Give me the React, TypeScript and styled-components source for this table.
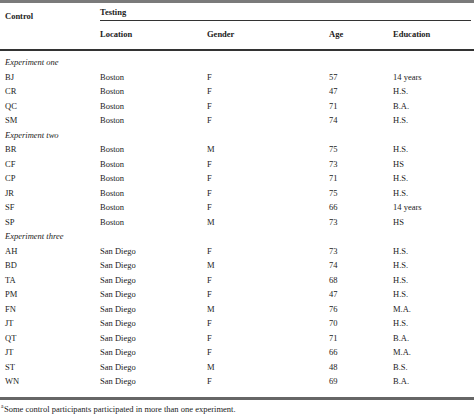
import styled, { createGlobalStyle } from "styled-components";

const GlobalStyle = createGlobalStyle`
  html, body { margin: 0; padding: 0; background: #fff; }
  body { font-family: "Liberation Serif", "Times New Roman", serif; color: #222; }
`;

type Row = { id: string; loc: string; gender: string; age: number; edu: string };
type Group = { title: string; rows: Row[] };

const groups: Group[] = [
  {
    title: "Experiment one",
    rows: [
      { id: "BJ", loc: "Boston", gender: "F", age: 57, edu: "14 years" },
      { id: "CR", loc: "Boston", gender: "F", age: 47, edu: "H.S." },
      { id: "QC", loc: "Boston", gender: "F", age: 71, edu: "B.A." },
      { id: "SM", loc: "Boston", gender: "F", age: 74, edu: "H.S." },
    ],
  },
  {
    title: "Experiment two",
    rows: [
      { id: "BR", loc: "Boston", gender: "M", age: 75, edu: "H.S." },
      { id: "CF", loc: "Boston", gender: "F", age: 73, edu: "HS" },
      { id: "CP", loc: "Boston", gender: "F", age: 71, edu: "H.S." },
      { id: "JR", loc: "Boston", gender: "F", age: 75, edu: "H.S." },
      { id: "SF", loc: "Boston", gender: "F", age: 66, edu: "14 years" },
      { id: "SP", loc: "Boston", gender: "M", age: 73, edu: "HS" },
    ],
  },
  {
    title: "Experiment three",
    rows: [
      { id: "AH", loc: "San Diego", gender: "F", age: 73, edu: "H.S." },
      { id: "BD", loc: "San Diego", gender: "M", age: 74, edu: "H.S." },
      { id: "TA", loc: "San Diego", gender: "F", age: 68, edu: "H.S." },
      { id: "PM", loc: "San Diego", gender: "F", age: 47, edu: "H.S." },
      { id: "FN", loc: "San Diego", gender: "M", age: 76, edu: "M.A." },
      { id: "JT", loc: "San Diego", gender: "F", age: 70, edu: "H.S." },
      { id: "QT", loc: "San Diego", gender: "F", age: 71, edu: "B.A." },
      { id: "JT", loc: "San Diego", gender: "F", age: 66, edu: "M.A." },
      { id: "ST", loc: "San Diego", gender: "M", age: 48, edu: "B.S." },
      { id: "WN", loc: "San Diego", gender: "F", age: 69, edu: "B.A." },
    ],
  },
];

const cols = "95px 107px 122px 64px 1fr";

const Page = styled.div`
  width: 474px;
  font-size: 8.5px;
  border-top: 3px solid #7a7a7a;
`;

const Head = styled.div`
  display: grid;
  grid-template-columns: ${cols};
  padding-left: 5px;
  border-bottom: 2px solid #333;
  font-weight: bold;
`;

const Control = styled.div`
  grid-row: 1 / span 2;
  padding-top: 8px;
`;

const Testing = styled.div`
  grid-column: 2 / span 4;
  margin-right: 3px;
  height: 18px;
  padding-top: 4px;
  box-sizing: border-box;
  border-bottom: 1.5px solid #333;
`;

const HeadCell = styled.div`
  height: 28px;
  line-height: 27px;
`;

const Body = styled.div`
  padding: 4px 0 8px 5px;
  border-bottom: 3px solid #666;
`;

const GroupTitle = styled.div`
  font-style: italic;
  height: 14.5px;
  line-height: 14.5px;
`;

const DataRow = styled.div`
  display: grid;
  grid-template-columns: ${cols};
  height: 14.5px;
  line-height: 14.5px;
`;

const Note = styled.p`
  margin: 3px 0 0 1px;
  font-size: 8.5px;
  sup { font-size: 5.5px; vertical-align: 4px; margin-right: 0.5px; }
`;

export default function App() {
  return (
    <Page>
      <GlobalStyle />
      <Head>
        <Control>Control</Control>
        <Testing>Testing</Testing>
        <HeadCell>Location</HeadCell>
        <HeadCell>Gender</HeadCell>
        <HeadCell>Age</HeadCell>
        <HeadCell>Education</HeadCell>
      </Head>
      <Body>
        {groups.map((g) => (
          <div key={g.title}>
            <GroupTitle>{g.title}</GroupTitle>
            {g.rows.map((r, i) => (
              <DataRow key={r.id + i}>
                <span>{r.id}</span>
                <span>{r.loc}</span>
                <span>{r.gender}</span>
                <span>{r.age}</span>
                <span>{r.edu}</span>
              </DataRow>
            ))}
          </div>
        ))}
      </Body>
      <Note>
        <sup>a</sup>Some control participants participated in more than one experiment.
      </Note>
    </Page>
  );
}
